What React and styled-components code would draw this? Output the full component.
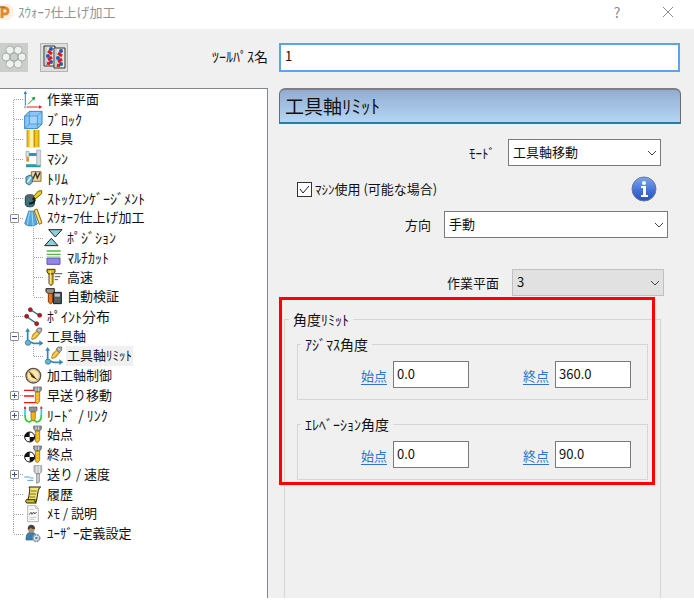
import React, { useState } from "react";
import styled, { createGlobalStyle } from "styled-components";

const GlobalStyle = createGlobalStyle`
  * { box-sizing: border-box; }
  body { margin: 0; background: #fff; }
  body, button, input, select {
    font-family: "Noto Sans CJK JP", "Noto Sans", sans-serif;
    font-size: 13px;
    color: #111;
  }
`;

const Window = styled.div`
  display: flex;
  flex-direction: column;
  min-height: calc(100vh - 2px);
  background: #f0f0f0;
`;

const TitleBar = styled.header`
  display: flex;
  align-items: center;
  height: 29px;
  padding: 0 18px 5px 0;
  background: #fff;
  color: #949494;
`;

const Title = styled.h1`
  flex: 1;
  margin: 0 0 0 5px;
  font-size: 13px;
  font-weight: 400;
  line-height: 20px;
`;

const CaptionButton = styled.button`
  display: grid;
  place-items: center;
  width: 16px;
  height: 20px;
  margin-left: 35px;
  padding: 0;
  border: 0;
  background: none;
  font-size: 14px;
  line-height: 20px;
  color: #8a8a8a;
`;

const NameBar = styled.div`
  display: grid;
  grid-template-columns: 268px 1fr;
  align-items: center;
  height: 59px;
  padding: 0 14px 3px 0;
`;

const Tools = styled.div`
  display: flex;
  align-items: center;
  gap: 12px;
`;

const ToolButton = styled.button`
  display: grid;
  place-items: center;
  width: 28px;
  height: 29px;
  padding: 0;
  border: 1px solid ${(p) => (p.disabled ? "#cbcecb" : "#b4b4b4")};
  background: ${(p) => (p.disabled ? "#cbcecb" : "#dedede")};
`;

const NameLabel = styled.label`
  margin-left: auto;
  padding-bottom: 3px;
  font-size: 14px;
  line-height: 20px;
`;

const NameInput = styled.input`
  width: calc(100% - 11px);
  height: 29px;
  margin-left: 11px;
  padding: 0 4px 4px;
  border: 2px solid #5ba4e8;
  outline: 0;
  background: #fff;
`;

const Body = styled.div`
  flex: 1;
  display: grid;
  grid-template-columns: 268px 1fr;
`;

const TreePanel = styled.nav`
  padding: 1px 0 0 4px;
  border-top: 1px solid #828790;
  border-right: 1px solid #828790;
  background: #fff;
`;

const TreeList = styled.ul`
  display: grid;
  grid-auto-rows: 1fr;
  height: 454px;
  margin: 0;
  padding: 0;
  list-style: none;
`;

const TreeRow = styled.li`
  display: flex;
  align-items: center;
  min-height: 0;
`;

const dots = (dir) => `repeating-linear-gradient(${dir}, #a0a0a0 0 1px, transparent 1px 2px)`;

const Guide = styled.span`
  display: grid;
  place-items: center;
  align-self: stretch;
  width: 20px;
  background-image: ${dots("to bottom")}, ${dots("to right")};
  background-repeat: no-repeat;
  background-size: 1px ${(p) => (p.$kind === "last" || p.$kind === "first" ? "50%" : "100%")},
    ${(p) => (p.$kind === "pass" ? "0" : "10px")} 1px;
  background-position: 9px ${(p) => (p.$kind === "first" ? "100%" : "0")}, 10px 50%;
`;

const Expander = styled.button`
  display: grid;
  place-items: center;
  width: 9px;
  height: 9px;
  padding: 0;
  border: 1px solid #919191;
  border-radius: 1px;
  background: #fff;
`;

const TreeLabel = styled.span`
  margin-left: 2px;
  padding: 0 1px 2px;
  font-size: ${(p) => (p.$kana ? "14px" : "13px")};
  line-height: 18px;
  white-space: nowrap;
  background: ${(p) => (p.$selected ? "#f0f0f0" : "none")};
`;

const Form = styled.form`
  display: flex;
  flex-direction: column;
`;

const Banner = styled.h2`
  height: 36px;
  margin: 0 13px 15px 11px;
  padding: 0 5px;
  border: 1px solid #6c6c6c;
  border-top: 2px solid #7d7f84;
  border-bottom: 2px solid #257f9e;
  border-radius: 6px 6px 0 0;
  background: linear-gradient(#93acd2, #b4d6f4);
  font-size: 19px;
  font-weight: 400;
  line-height: 32px;
`;

const Row = styled.div`
  display: flex;
  align-items: center;
  justify-content: flex-end;
  gap: 13px;
  margin-top: ${(p) => p.$top || 0}px;
  padding-right: ${(p) => p.$right}px;
`;

const FieldLabel = styled.label`
  line-height: 20px;
`;

const SelectBox = styled.span`
  display: grid;
  align-items: center;
  width: ${(p) => p.$width}px;

  & > * { grid-area: 1 / 1; }
  & > svg { justify-self: end; margin-right: 4px; pointer-events: none; }
`;

const Select = styled.select`
  appearance: none;
  width: 100%;
  height: 27px;
  padding: 0 20px 3px 4px;
  border: 1px solid ${(p) => (p.$muted ? "#c0c0c0" : "#7a7a7a")};
  border-radius: 0;
  background: ${(p) => (p.$muted ? "#e1e1e1" : "#fff")};
`;

const CheckRow = styled.div`
  display: flex;
  align-items: center;
  gap: 3px;
  margin: 10px 37px 9px 29px;
`;

const CheckBox = styled.span`
  display: grid;

  & > * { grid-area: 1 / 1; }
  & > svg { pointer-events: none; }
`;

const CheckInput = styled.input`
  appearance: none;
  width: 15px;
  height: 15px;
  margin: 0;
  border: 1px solid #333;
  background: #fff;
`;

const InfoButton = styled.button`
  margin-left: auto;
  width: 26px;
  height: 26px;
  padding: 0;
  border: 0;
  background: none;
`;

const AngleArea = styled.div`
  position: relative;
  flex: 1;
  display: flex;
  margin: 13px 33px 0 16px;
`;

const Highlight = styled.div`
  position: absolute;
  top: -12px;
  left: -5px;
  right: 6px;
  height: 188px;
  border: 3px solid #fe0000;
  pointer-events: none;
`;

const Group = styled.fieldset`
  flex: 1;
  min-width: 0;
  margin: 0;
  padding: 5px 12px 0;
  border: 1px solid #d6d6d6;
  border-bottom: 0;
`;

const SubGroup = styled.fieldset`
  min-width: 0;
  margin: 0 0 14px;
  padding: 7px 16px 11px 63px;
  border: 1px solid #d6d6d6;
`;

const Legend = styled.legend`
  margin-left: ${(p) => (p.$inner ? "-60px" : "-8px")};
  padding: 0 4px;
  font-size: 14px;
  line-height: 20px;
`;

const RangeRow = styled.div`
  display: flex;
  justify-content: space-between;
`;

const Limit = styled.div`
  display: flex;
  align-items: center;
  gap: 6px;
`;

const LimitLink = styled.a`
  padding-top: 2px;
  line-height: 20px;
  color: #2f74c8;
  text-underline-offset: 3px;
`;

const LimitInput = styled.input`
  width: 76px;
  height: 27px;
  padding: 0 3px 3px;
  border: 1px solid #7a7a7a;
  background: #fff;
`;

/* Icons share a 60-unit grid and are drawn at 20px. */
const Glyph = styled.svg`
  display: block;
  flex: none;
  width: 20px;
  height: 20px;
`;

const Cutter = () => (
  <>
    <path d="M29 3h23v9l-5 6H34l-5-6z" fill="#8d9297" stroke="#4d5155" strokeWidth="2" />
    <path d="M36 4v12M44 4v12" stroke="#d5d8da" strokeWidth="3" />
    <path d="M34 18h13v28l-6 7-7-4z" fill="#f0b50f" stroke="#89640a" strokeWidth="2" />
    <path d="M37 26l7-4M37 36l7-4M37 46l7-4" stroke="#fff0a0" strokeWidth="2" />
  </>
);

const DatumTarget = () => (
  <>
    <circle cx="17" cy="36" r="15" fill="#fff" stroke="#111" strokeWidth="3" />
    <path d="M17 36V21A15 15 0 0 0 2 36zM17 36v15a15 15 0 0 0 15-15z" fill="#111" />
  </>
);

const AxisTool = () => (
  <>
    <path d="M11 10v32l18 7h22M11 42L5 50" fill="none" stroke="#3587ae" strokeWidth="5" />
    <path d="M4 14l7-11 7 11zM46 40l12 9-12 8z" fill="#3587ae" />
    <circle cx="12" cy="47" r="8" fill="#69b3d3" stroke="#276f91" strokeWidth="2" />
    <path d="M23 34l4-12 11-10 9 8-11 13-12 5z" fill="#efb524" stroke="#8c6c17" strokeWidth="2" />
    <path d="M26 33l15-16" stroke="#fff09a" strokeWidth="3" />
    <path d="M36 10l6-7h11v9l-6 8z" fill="#a7a9ab" stroke="#5a5c5e" strokeWidth="2" />
    <path d="M42 6l7 7" stroke="#eee" strokeWidth="2" />
  </>
);

const icons = {
  workplane: (
    <>
      <path d="M4 46V6" stroke="#1c86d8" strokeWidth="3" />
      <path d="M-1 12l5-10 5 10z" fill="#1c86d8" />
      <path d="M12 43l16-16" stroke="#20a04a" strokeWidth="3" />
      <path d="M22 23l12-3-3 12z" fill="#20a04a" />
      <path d="M9 51h38" stroke="#e62222" strokeWidth="3" />
      <path d="M45 46l10 5-10 5z" fill="#e62222" />
      <circle cx="4" cy="51" r="3" fill="#fff" stroke="#888" strokeWidth="2" />
    </>
  ),
  block: (
    <>
      <path d="M2 18L16 4h38v38L40 56H2z" fill="#8ac6f6" stroke="#3a86c6" strokeWidth="3" />
      <path d="M2 18h38v38M40 18L54 4M16 4v38h38M16 42L2 56" fill="none" stroke="#3a86c6" strokeWidth="2" />
      <path d="M18 20h20v20H18z" fill="#a5d3f8" />
    </>
  ),
  tool: (
    <>
      <path d="M9 3h36v52H9z" fill="#f3c318" />
      <path d="M17 3h11v52H17z" fill="#fff3a6" />
      <path d="M9 3v52M45 3v52M31 3v52" stroke="#94720c" strokeWidth="2" />
    </>
  ),
  machine: (
    <>
      <path d="M6 12h34v9H6zM6 46h44v9H6z" fill="#2f96a6" />
      <path d="M38 3h12v46H38z" fill="#d5dbe0" stroke="#9aa2a8" strokeWidth="2" />
      <path d="M6 7h9v18H6z" fill="#dfe4e8" stroke="#8e979e" strokeWidth="2" />
      <path d="M7 25h8v13H7z" fill="#e98a23" />
    </>
  ),
  trim: (
    <>
      <path d="M22 8h29v29H22z" fill="#e8d49b" stroke="#96732e" strokeWidth="3" />
      <path d="M26 31l9-19 5 15 8-16" fill="none" stroke="#333" strokeWidth="4" />
      <path d="M6 24l12-6 7 5v17l-9 8L6 42z" fill="#6fb8cf" stroke="#2f6c82" strokeWidth="3" />
      <path d="M10 40l11-16" stroke="#dff4fa" strokeWidth="4" />
    </>
  ),
  engagement: (
    <>
      <path d="M4 25c0-10 27-10 27 0v21c0 10-27 10-27 0z" fill="#397583" stroke="#243a42" strokeWidth="3" />
      <ellipse cx="18" cy="23" rx="14" ry="7" fill="#59646a" />
      <path d="M15 43c12 2 16-3 18-12" fill="none" stroke="#171b1d" strokeWidth="6" />
      <path d="M27 24L43 6l10-1v9L35 29z" fill="#f1cc17" stroke="#6f610f" strokeWidth="3" />
      <path d="M23 30l7-7 5 6-8 5z" fill="#222" />
    </>
  ),
  swarf: (
    <>
      <path d="M14 9h14l12 39c-9 8-30 8-38-1z" fill="#54a8de" stroke="#28749f" strokeWidth="2" />
      <path d="M17 11L10 50M24 11l3 41" stroke="#a5d8f4" strokeWidth="3" />
      <path d="M30 7l9-4 15 42-8 4z" fill="#f5c83c" stroke="#8c6a1b" strokeWidth="3" />
      <path d="M36 7l13 38" stroke="#fff0b0" strokeWidth="3" />
    </>
  ),
  position: (
    <>
      <path d="M14 5h40L34 27z" fill="#8bd0df" stroke="#222" strokeWidth="3" />
      <path d="M2 53h40L22 31z" fill="#8bd0df" stroke="#222" strokeWidth="3" />
    </>
  ),
  multicut: (
    <>
      <path d="M8 9h42M8 19h42" stroke="#4dbb3f" strokeWidth="4" />
      <path d="M9 30h39v19H9z" fill="#9286e8" stroke="#5f56bd" strokeWidth="3" />
      <path d="M8 26h42" stroke="#91cf88" strokeWidth="2" />
    </>
  ),
  speed: (
    <>
      <path d="M9 4h24v8l-5 6H14l-5-6z" fill="#e2b51c" stroke="#39310f" strokeWidth="3" />
      <path d="M15 18h12v28l-6 7-6-7z" fill="#edc426" stroke="#4b3e0b" strokeWidth="3" />
      <path d="M19 8v39" stroke="#fff2a0" strokeWidth="3" />
      <path d="M32 17h23M32 26h17M32 35h10" stroke="#555" strokeWidth="3" />
    </>
  ),
  verify: (
    <>
      <path d="M6 5h25v9l-5 6H12l-6-6z" fill="#94918c" stroke="#222" strokeWidth="3" />
      <path d="M13 19h13v26l-6 6-7-6z" fill="#ed751d" stroke="#843b0a" strokeWidth="3" />
      <path d="M28 16h24v34H28z" fill="#515b61" stroke="#161616" strokeWidth="3" />
      <path d="M32 20h16v9H32z" fill="#b8c2c5" />
      <path d="M33 36h5v4h-5zM42 36h5v4h-5z" fill="#e84521" />
    </>
  ),
  points: (
    <>
      <path d="M20 9l28 17M8 29l30 21" stroke="#4cacc4" strokeWidth="4" />
      <path d="M24 11l19 12M13 33l20 13" stroke="#333" strokeWidth="2" />
      <g fill="#b51e28" stroke="#6f0e16" strokeWidth="2">
        <circle cx="19" cy="8" r="6" />
        <circle cx="47" cy="25" r="6" />
        <circle cx="8" cy="28" r="6" />
        <circle cx="38" cy="50" r="6" />
      </g>
    </>
  ),
  axis: <AxisTool />,
  compass: (
    <>
      <circle cx="28" cy="29" r="22" fill="#f7e9bb" stroke="#55524a" strokeWidth="4" />
      <circle cx="28" cy="29" r="18" fill="none" stroke="#e0b04a" strokeWidth="3" />
      <path d="M15 15l18 19-10-1z" fill="#222" />
      <path d="M12 14l14 8 8 12-6 4z" fill="#ef9f1c" />
      <path d="M14 15l28 28-17-9z" fill="#2b2b2b" />
    </>
  ),
  rapid: (
    <>
      <path d="M0 13h30M0 30h30M0 50h38" stroke="#ef1616" strokeWidth="4" />
      <Cutter />
    </>
  ),
  leads: (
    <>
      <path d="M3 2v28M52 2v28" stroke="#29cdec" strokeWidth="5" />
      <path d="M3 2v7M52 2v7" stroke="#e91f2b" strokeWidth="5" />
      <path d="M3 28c0 15 6 20 14 20l10-8 10 8c9 0 15-5 15-20" fill="none" stroke="#31c934" strokeWidth="5" />
      <path d="M16 3h23v10l-5 5H21l-5-5z" fill="#8d9297" stroke="#4d5155" strokeWidth="2" />
      <path d="M21 18h13v20l-6 8-7-8z" fill="#f0b50f" stroke="#89640a" strokeWidth="2" />
    </>
  ),
  point: (
    <>
      <Cutter />
      <DatumTarget />
    </>
  ),
  feed: (
    <>
      <path d="M30 2h23v18l-5 6H35l-5-6z" fill="#bfc3c6" stroke="#85898c" strokeWidth="2" />
      <path d="M38 3v22M46 3v22" stroke="#eceff1" strokeWidth="3" />
      <path d="M38 26h8v25l-8 4z" fill="#d2d5d7" stroke="#666" strokeWidth="2" />
      <path d="M1 36h15l4 3h9M10 46h18" fill="none" stroke="#48a2dc" strokeWidth="3" />
    </>
  ),
  history: (
    <>
      <path d="M15 6h35c-6 3-6 8-8 15l-5 29H7c7-6 7-15 9-25 1-9 2-13-1-19z" fill="#f5e66c" stroke="#24220f" strokeWidth="3" />
      <path d="M20 18h18M18 27h18M16 36h18" stroke="#7b7130" strokeWidth="3" />
      <path d="M7 44h27c-3 4-1 9 3 10H9c-5-1-5-7-2-10z" fill="#d5bf35" stroke="#24220f" strokeWidth="3" />
    </>
  ),
  memo: (
    <>
      <path d="M11 5h24l8 8v40H11z" fill="#fafafa" stroke="#8e9296" strokeWidth="2" />
      <path d="M35 5v9h8M17 16h12M17 40h20M17 46h14" fill="none" stroke="#aaa" strokeWidth="2" />
      <path d="M16 32l5-7 3 6 5-7 3 6 6-6" fill="none" stroke="#555" strokeWidth="3" />
    </>
  ),
  user: (
    <>
      <path d="M6 48c0-17 4-23 16-23 11 0 16 6 16 23z" fill="#397fad" stroke="#285f85" strokeWidth="2" />
      <circle cx="22" cy="16" r="10" fill="#b98e6d" />
      <path d="M11 16c-1-19 24-17 22-1-7 1-10-2-13-4-2 4-5 5-9 5z" fill="#4a4039" />
      <circle cx="37" cy="42" r="10" fill="#e4ebf0" stroke="#7f929f" strokeWidth="5" strokeDasharray="6 2" />
      <circle cx="37" cy="42" r="4" fill="#4e88b0" />
    </>
  ),
};

const nodes = [
  { icon: "workplane", label: "作業平面" },
  { icon: "block", label: "ﾌﾞﾛｯｸ", kana: true },
  { icon: "tool", label: "工具" },
  { icon: "machine", label: "ﾏｼﾝ", kana: true },
  { icon: "trim", label: "ﾄﾘﾑ", kana: true },
  { icon: "engagement", label: "ｽﾄｯｸｴﾝｹﾞｰｼﾞﾒﾝﾄ", kana: true },
  { icon: "swarf", label: "ｽｳｫｰﾌ仕上げ加工", toggle: "minus" },
  { icon: "position", label: "ﾎﾟｼﾞｼｮﾝ", kana: true, child: true },
  { icon: "multicut", label: "ﾏﾙﾁｶｯﾄ", kana: true, child: true },
  { icon: "speed", label: "高速", child: true },
  { icon: "verify", label: "自動検証", child: true, last: true },
  { icon: "points", label: "ﾎﾟｲﾝﾄ分布", kana: true },
  { icon: "axis", label: "工具軸", toggle: "minus" },
  { icon: "axis", label: "工具軸ﾘﾐｯﾄ", child: true, last: true, selected: true },
  { icon: "compass", label: "加工軸制御" },
  { icon: "rapid", label: "早送り移動", toggle: "plus" },
  { icon: "leads", label: "ﾘｰﾄﾞ / ﾘﾝｸ", kana: true, toggle: "plus" },
  { icon: "point", label: "始点" },
  { icon: "point", label: "終点" },
  { icon: "feed", label: "送り / 速度", toggle: "plus" },
  { icon: "history", label: "履歴" },
  { icon: "memo", label: "ﾒﾓ / 説明" },
  { icon: "user", label: "ﾕｰｻﾞｰ定義設定", last: true },
];

function TreeNode({ node, first }) {
  const own = node.last ? "last" : first ? "first" : "branch";
  return (
    <TreeRow role="treeitem" aria-level={node.child ? 2 : 1} aria-selected={!!node.selected}>
      {node.child && <Guide $kind="pass" />}
      <Guide $kind={own}>
        {node.toggle && (
          <Expander type="button" aria-label={node.label}>
            <svg width="7" height="7" viewBox="0 0 7 7" shapeRendering="crispEdges">
              <path d={node.toggle === "plus" ? "M1 3h5v1H1zM3 1h1v5H3z" : "M1 3h5v1H1z"} fill="#3a55a0" />
            </svg>
          </Expander>
        )}
      </Guide>
      <Glyph viewBox="0 0 60 60" aria-hidden="true">{icons[node.icon]}</Glyph>
      <TreeLabel $kana={node.kana} $selected={node.selected}>{node.label}</TreeLabel>
    </TreeRow>
  );
}

function Dropdown({ id, label, value, width, muted }) {
  return (
    <>
      <FieldLabel htmlFor={id}>{label}</FieldLabel>
      <SelectBox $width={width}>
        <Select id={id} $muted={muted} defaultValue={value}>
          <option>{value}</option>
        </Select>
        <svg width="10" height="6" viewBox="0 0 10 6" aria-hidden="true">
          <path d="M1 1l4 4 4-4" fill="none" stroke="#444" />
        </svg>
      </SelectBox>
    </>
  );
}

function AngleRange({ id, title, start, end }) {
  return (
    <SubGroup>
      <Legend $inner>{title}</Legend>
      <RangeRow>
        <Limit>
          <LimitLink href="#start" id={`${id}-start`}>始点</LimitLink>
          <LimitInput aria-labelledby={`${id}-start`} defaultValue={start} />
        </Limit>
        <Limit>
          <LimitLink href="#end" id={`${id}-end`}>終点</LimitLink>
          <LimitInput aria-labelledby={`${id}-end`} defaultValue={end} />
        </Limit>
      </RangeRow>
    </SubGroup>
  );
}

const LogoIcon = () => (
  <svg width="13" height="18" viewBox="0 0 13 18" aria-hidden="true">
    <path d="M0 1h9l4 4v8l-4 4H0z" fill="#fdf0e2" />
    <path d="M2 15V5h3a3 3 0 0 1 0 6H2" fill="none" stroke="#e08a2e" strokeWidth="3" />
    <path d="M0 4h5" stroke="#8c5a2a" />
  </svg>
);

const FlowerIcon = () => (
  <svg width="26" height="26" viewBox="0 0 26 26" aria-hidden="true">
    <g fill="#eef1ee" stroke="#a3b0a8">
      {[0, 60, 120, 180, 240, 300].map((a) => (
        <circle key={a} cx="13" cy="5" r="4" transform={`rotate(${a + 30} 13 13)`} />
      ))}
    </g>
    <circle cx="13" cy="13" r="4" fill="#cbcecb" stroke="#a3b0a8" />
  </svg>
);

const Card = ({ x, y }) => (
  <g transform={`translate(${x} ${y})`}>
    <path d="M1 1h11v20H1z" fill="#efe6cf" stroke="#333" />
    <path d="M3 2v18" stroke="#8cbcd8" />
    <g fill="#1f56c8">
      <circle cx="8" cy="4" r="2" />
      <circle cx="5" cy="11" r="2" />
      <circle cx="8" cy="17" r="2" />
    </g>
    <path d="M5 6l4 3M9 12l-4 3M4 18l3 1" stroke="#de1a1a" strokeWidth="3" />
  </g>
);

const CardsIcon = () => (
  <svg width="26" height="26" viewBox="0 0 26 26" aria-hidden="true">
    <Card x={2} y={1} />
    <Card x={12} y={3} />
  </svg>
);

const InfoIcon = () => (
  <svg width="26" height="26" viewBox="0 0 26 26" aria-hidden="true">
    <defs>
      <linearGradient id="orb" x1="0" y1="0" x2="0" y2="1">
        <stop offset="0" stopColor="#7ea6ee" />
        <stop offset="0.6" stopColor="#3f6fd4" />
        <stop offset="1" stopColor="#2a52b8" />
      </linearGradient>
    </defs>
    <circle cx="13" cy="13" r="12" fill="url(#orb)" stroke="#66769c" />
    <circle cx="13" cy="7" r="2" fill="#fff" />
    <path d="M10 10h5v9h2v2h-7v-2h2v-7h-2z" fill="#fff" />
  </svg>
);

export default function App() {
  const [useMachine, setUseMachine] = useState(true);
  return (
    <Window>
      <GlobalStyle />
      <TitleBar>
        <LogoIcon />
        <Title>ｽｳｫｰﾌ仕上げ加工</Title>
        <CaptionButton type="button">?</CaptionButton>
        <CaptionButton type="button" aria-label="閉じる">
          <svg width="12" height="12" viewBox="0 0 12 12">
            <path d="M1 1l10 10M11 1L1 11" stroke="#8a8a8a" />
          </svg>
        </CaptionButton>
      </TitleBar>
      <NameBar>
        <Tools>
          <ToolButton type="button" disabled><FlowerIcon /></ToolButton>
          <ToolButton type="button"><CardsIcon /></ToolButton>
          <NameLabel htmlFor="toolpath">ﾂｰﾙﾊﾟｽ名</NameLabel>
        </Tools>
        <NameInput id="toolpath" defaultValue="1" />
      </NameBar>
      <Body>
        <TreePanel>
          <TreeList role="tree">
            {nodes.map((node, i) => (
              <TreeNode key={i} node={node} first={i === 0} />
            ))}
          </TreeList>
        </TreePanel>
        <Form>
          <Banner>工具軸ﾘﾐｯﾄ</Banner>
          <Row $right={33}>
            <Dropdown id="mode" label="ﾓｰﾄﾞ" value="工具軸移動" width={153} />
          </Row>
          <CheckRow>
            <CheckBox>
              <CheckInput
                id="machine"
                type="checkbox"
                checked={useMachine}
                onChange={(e) => setUseMachine(e.target.checked)}
              />
              {useMachine && (
                <svg width="15" height="15" viewBox="0 0 15 15" aria-hidden="true">
                  <path d="M3 7l3 4 6-7" fill="none" stroke="#222" />
                </svg>
              )}
            </CheckBox>
            <FieldLabel htmlFor="machine">ﾏｼﾝ使用 (可能な場合)</FieldLabel>
            <InfoButton type="button" aria-label="情報"><InfoIcon /></InfoButton>
          </CheckRow>
          <Row $right={26}>
            <Dropdown id="direction" label="方向" value="手動" width={224} />
          </Row>
          <Row $right={30} $top={31}>
            <Dropdown id="plane" label="作業平面" value="3" width={152} muted />
          </Row>
          <AngleArea>
            <Group>
              <Legend>角度ﾘﾐｯﾄ</Legend>
              <AngleRange id="azimuth" title="ｱｼﾞﾏｽ角度" start="0.0" end="360.0" />
              <AngleRange id="elevation" title="ｴﾚﾍﾞｰｼｮﾝ角度" start="0.0" end="90.0" />
            </Group>
            <Highlight />
          </AngleArea>
        </Form>
      </Body>
    </Window>
  );
}
